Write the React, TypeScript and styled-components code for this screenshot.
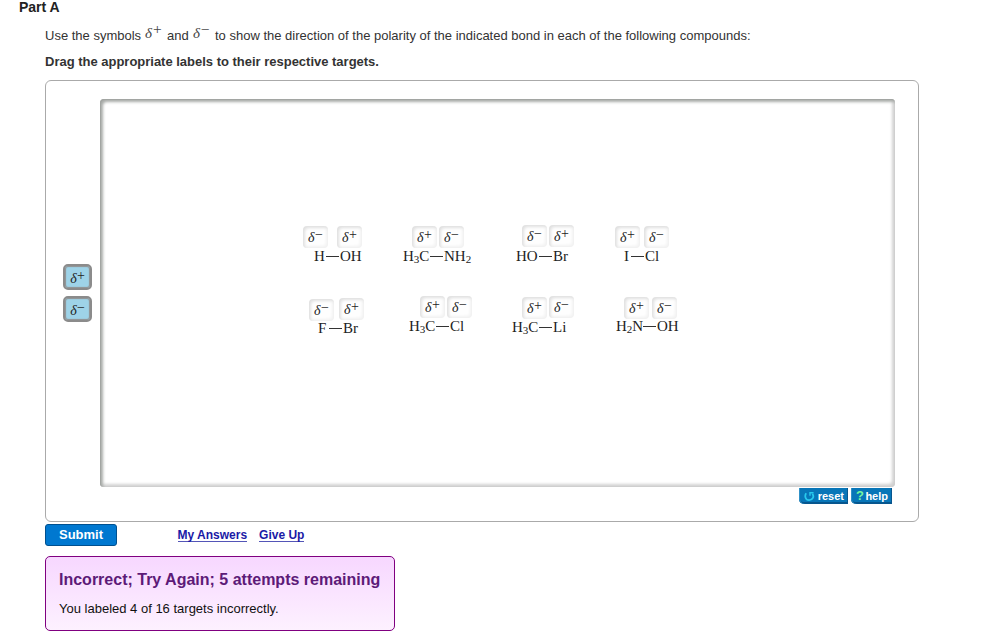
import React from "react";
import styled, { createGlobalStyle } from "styled-components";

type Sign = "+" | "−";
type Point = { x: number; y: number };
type Label = Point & { sign: Sign };
type Compound = Point & { left: string; leftWidth: number; right: string; labels: Label[] };

const GlobalStyle = createGlobalStyle`
  * { box-sizing: border-box; }
  body { margin: 0; background: #fff; color: #333; font: 13px/16px "Liberation Sans", Arial, sans-serif; }
`;

const Page = styled.main`
  width: 999px;
  height: 641px;
  overflow: hidden;
`;
const PartTitle = styled.h1`
  margin: 0 0 0 19px;
  height: 15px;
  font-size: 14px;
  line-height: 15px;
  font-weight: bold;
  color: #222;
`;
const Content = styled.section`
  margin-left: 45px;
`;
const Question = styled.p`
  display: flex;
  margin: 0;
  padding-top: 13px;
  height: 39px;
  white-space: nowrap;
`;
const Piece = styled.span<{ $width: number }>`
  flex: none;
  width: ${(p) => p.$width}px;
`;
const InlineSymbol = styled.span<{ $width: number }>`
  display: flex;
  flex: none;
  width: ${(p) => p.$width}px;
  height: 16px;
  margin-top: -3px;
  color: #444;
  font: italic 15px/16px "Liberation Serif", serif;
`;
const InlineSign = styled.span`
  margin: -2px 0 0 1px;
  font: 14px/14px "Liberation Serif", serif;
  transform: scaleX(1.1);
  transform-origin: left;
`;
const Instruction = styled.p`
  margin: 0;
  height: 26px;
  font-weight: bold;
  letter-spacing: -0.01px;
`;
const Exercise = styled.div`
  display: flex;
  width: 874px;
  height: 442px;
  padding: 18px 0 0 17px;
  border: 1px solid #aaa;
  border-radius: 6px;
`;
const Palette = styled.div`
  display: flex;
  flex-direction: column;
  gap: 6px;
  width: 37px;
  padding-top: 165px;
`;
const PaletteItem = styled.button`
  display: flex;
  width: 29px;
  height: 26px;
  padding: 4px 0 0 5px;
  border: 2px solid #8b8b8b;
  border-radius: 5px;
  box-shadow: inset 0 0 1px 1px #909090;
  background: #9ed3e8;
`;
const Work = styled.div`
  width: 795px;
`;
const Canvas = styled.div`
  position: relative;
  height: 388px;
  border-radius: 4px;
  box-shadow: inset 1px 1px #a2a5a2, inset 3px 3px 3px #a9aca9,
    inset -1px -1px #cfcfcf, inset -3px -3px 3px #d2d2d2;
`;
const Target = styled.span<{ $x: number; $y: number }>`
  position: absolute;
  left: ${(p) => p.$x - 100}px;
  top: ${(p) => p.$y - 99}px;
  display: flex;
  width: 25px;
  height: 22px;
  padding-left: 5px;
  padding-top: 3px;
  border-radius: 4px;
  background: #fefefe;
  box-shadow: inset 2px 2px 3px #e0e0e0, inset -2px -2px 3px #f2f2f2;
`;
const Delta = styled.span`
  width: 7px;
  color: #222;
  font: italic 14px/18px "Liberation Serif", serif;
`;
const Charge = styled.span`
  margin-top: -2px;
  color: #222;
  font: 14px/16px "Liberation Serif", serif;
`;
const Molecule = styled.div<{ $x: number; $y: number }>`
  position: absolute;
  left: ${(p) => p.$x - 100}px;
  top: ${(p) => p.$y - 99}px;
  display: flex;
  height: 18px;
  color: #222;
  font: 15px/18px "Liberation Serif", serif;
  white-space: nowrap;
`;
const Atoms = styled.span<{ $width?: number }>`
  width: ${(p) => (p.$width ? `${p.$width}px` : "auto")};
`;
const Subscript = styled.sub`
  font-size: 11px;
  line-height: 0;
  vertical-align: -2px;
`;
const Bond = styled.span`
  flex: none;
  width: 13px;
  height: 1px;
  margin: 9px 1px 0 0;
  background: #333;
`;
const Tools = styled.div`
  display: flex;
  justify-content: flex-end;
  gap: 3px;
  margin-top: 1px;
  padding-right: 3px;
`;
const ToolButton = styled.button<{ $width: number }>`
  display: flex;
  align-items: center;
  justify-content: space-between;
  width: ${(p) => p.$width}px;
  height: 16px;
  padding: 0 4px 0 5px;
  border: 0;
  border-radius: 0 0 0 5px;
  background: #0876b8;
  box-shadow: inset 1px 0 #3091c7, inset -1px -2px #07568e;
  color: #fff;
  font: bold 11px/14px "Liberation Sans", Arial, sans-serif;
`;
const HelpMark = styled.span`
  color: #72f5a0;
  font-size: 13px;
`;
const Actions = styled.div`
  display: flex;
  align-items: center;
  height: 22px;
  margin-top: 2px;
`;
const Submit = styled.button`
  width: 72px;
  height: 22px;
  padding: 0 0 1px;
  border: 1px solid #00508f;
  border-radius: 3px;
  background: #0078d0;
  color: #fff;
  font: bold 13px/18px "Liberation Sans", Arial, sans-serif;
`;
const ActionLink = styled.a<{ $gap: number }>`
  height: 14px;
  margin-left: ${(p) => p.$gap}px;
  border-bottom: 1px solid #5355b7;
  color: #1a1aa6;
  font-size: 12px;
  font-weight: bold;
  line-height: 14px;
`;
const Feedback = styled.section`
  width: 350px;
  height: 75px;
  margin-top: 10px;
  padding: 13px;
  border: 1px solid #800080;
  border-radius: 5px;
  background: linear-gradient(#f7d7ff, #fdf1ff);
`;
const FeedbackTitle = styled.h2`
  margin: 0 0 10px;
  color: #5d1a78;
  font-size: 16px;
  line-height: 20px;
  white-space: nowrap;
`;
const FeedbackText = styled.p`
  margin: 0;
  color: #111;
  font-size: 13px;
  line-height: 17px;
`;

const compounds: Compound[] = [
  { x: 314, y: 247, left: "H", leftWidth: 12, right: "OH", labels: [{ x: 303, y: 226, sign: "−" }, { x: 337, y: 226, sign: "+" }] },
  { x: 403, y: 247, left: "H3C", leftWidth: 27, right: "NH2", labels: [{ x: 412, y: 226, sign: "+" }, { x: 439, y: 226, sign: "−" }] },
  { x: 516, y: 247, left: "HO", leftWidth: 23, right: "Br", labels: [{ x: 522, y: 225, sign: "−" }, { x: 549, y: 225, sign: "+" }] },
  { x: 624, y: 247, left: "I", leftWidth: 7, right: "Cl", labels: [{ x: 615, y: 226, sign: "+" }, { x: 644, y: 226, sign: "−" }] },
  { x: 318, y: 319, left: "F", leftWidth: 11, right: "Br", labels: [{ x: 309, y: 299, sign: "−" }, { x: 339, y: 298, sign: "+" }] },
  { x: 409, y: 317, left: "H3C", leftWidth: 27, right: "Cl", labels: [{ x: 420, y: 296, sign: "+" }, { x: 447, y: 296, sign: "−" }] },
  { x: 512, y: 318, left: "H3C", leftWidth: 27, right: "Li", labels: [{ x: 522, y: 297, sign: "+" }, { x: 549, y: 296, sign: "−" }] },
  { x: 616, y: 317, left: "H2N", leftWidth: 27, right: "OH", labels: [{ x: 624, y: 297, sign: "+" }, { x: 652, y: 297, sign: "−" }] },
];

const Formula = ({ text }: { text: string }) => (
  <>{text.split(/(\d)/).map((part, i) => (/\d/.test(part) ? <Subscript key={i}>{part}</Subscript> : part))}</>
);
const PartialCharge = ({ sign }: { sign: Sign }) => (
  <><Delta>δ</Delta><Charge>{sign}</Charge></>
);
const ResetIcon = () => (
  <svg width="11" height="11" viewBox="0 0 11 11" fill="none" stroke="#28c9ed" strokeWidth="1.8">
    <path d="M2.2 2.3C0.3 5 1.5 9 5 9.2C8.8 9.3 10.5 5.2 8.3 2.9" />
    <path d="M6 4.8V1.7H9.6" strokeWidth="1.4" />
  </svg>
);

export default function App() {
  return (
    <Page>
      <GlobalStyle />
      <PartTitle>Part A</PartTitle>
      <Content>
        <Question>
          <Piece $width={100}>Use the symbols</Piece>
          <InlineSymbol $width={22}>δ<InlineSign>+</InlineSign></InlineSymbol>
          <Piece $width={26}>and</Piece>
          <InlineSymbol $width={22}>δ<InlineSign>−</InlineSign></InlineSymbol>
          <span>to show the direction of the polarity of the indicated bond in each of the following compounds:</span>
        </Question>
        <Instruction>Drag the appropriate labels to their respective targets.</Instruction>
        <Exercise>
          <Palette>
            <PaletteItem><PartialCharge sign="+" /></PaletteItem>
            <PaletteItem><PartialCharge sign="−" /></PaletteItem>
          </Palette>
          <Work>
            <Canvas>
              {compounds.map((c) => (
                <React.Fragment key={`${c.x}-${c.y}`}>
                  {c.labels.map((label) => (
                    <Target key={label.x} $x={label.x} $y={label.y}><PartialCharge sign={label.sign} /></Target>
                  ))}
                  <Molecule $x={c.x} $y={c.y}>
                    <Atoms $width={c.leftWidth}><Formula text={c.left} /></Atoms>
                    <Bond />
                    <Atoms><Formula text={c.right} /></Atoms>
                  </Molecule>
                </React.Fragment>
              ))}
            </Canvas>
            <Tools>
              <ToolButton $width={49}><ResetIcon />reset</ToolButton>
              <ToolButton $width={41}><HelpMark>?</HelpMark>help</ToolButton>
            </Tools>
          </Work>
        </Exercise>
        <Actions>
          <Submit>Submit</Submit>
          <ActionLink $gap={60.5}>My Answers</ActionLink>
          <ActionLink $gap={12}>Give Up</ActionLink>
        </Actions>
        <Feedback>
          <FeedbackTitle>Incorrect; Try Again; 5 attempts remaining</FeedbackTitle>
          <FeedbackText>You labeled 4 of 16 targets incorrectly.</FeedbackText>
        </Feedback>
      </Content>
    </Page>
  );
}
